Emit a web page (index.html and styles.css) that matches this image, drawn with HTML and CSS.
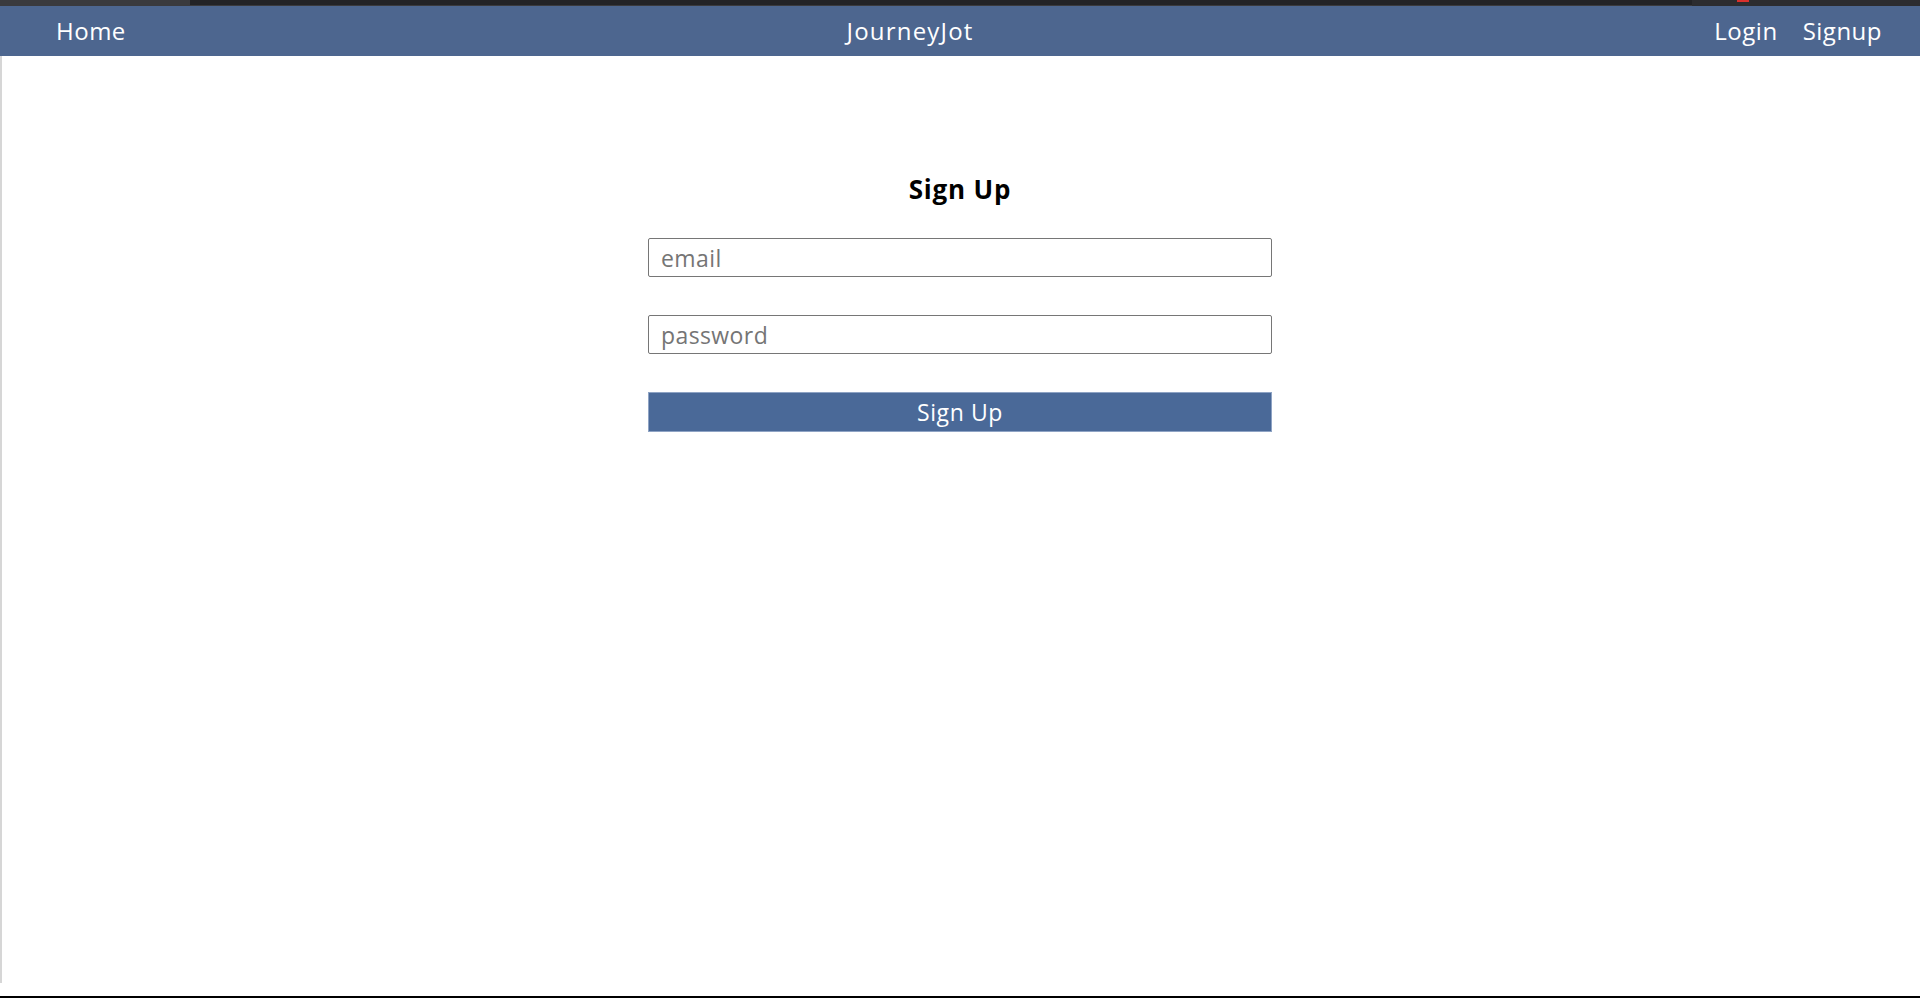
FILE: index.html
```html
<!DOCTYPE html>
<html lang="en">
<head>
<meta charset="utf-8">
<title>JourneyJot</title>
<link rel="stylesheet" href="styles.css">
</head>
<body>
<div class="page">
  <div class="topstrip">
    <div class="strip-a"></div>
    <div class="strip-b"></div>
    <div class="strip-c"><span class="strip-mark"></span></div>
  </div>
  <nav class="navbar">
    <a class="nav-link" href="#">Home</a>
    <a class="nav-link brand" href="#">JourneyJot</a>
    <div class="nav-right">
      <a class="nav-link" href="#">Login</a>
      <a class="nav-link" href="#">Signup</a>
    </div>
  </nav>
  <main class="content">
    <form class="signup-form">
      <h2 class="form-title">Sign Up</h2>
      <input class="field" type="email" placeholder="email">
      <input class="field" type="password" placeholder="password">
      <button class="submit" type="button">Sign Up</button>
    </form>
  </main>
  <div class="bottom-gap"></div>
  <div class="bottom-bar"></div>
</div>
</body>
</html>
```

FILE: styles.css
```css
* { box-sizing: border-box; }

html, body {
  margin: 0;
  padding: 0;
  background: #ffffff;
}

body {
  font-family: "Open Sans", "Liberation Sans", sans-serif;
  overflow: hidden;
}

.page {
  display: flex;
  flex-direction: column;
  height: 998px;
}

.topstrip {
  display: flex;
  height: 6px;
  background: #2c2c2f;
}

.strip-a {
  width: 190px;
  background: #3a3a3d;
}

.strip-b {
  width: 1502px;
  background: #232326;
  border-bottom: 1px solid #3a3a3d;
}

.strip-c {
  flex: 1;
  background: #2c2c2f;
  padding-left: 45px;
}

.strip-mark {
  display: block;
  width: 12px;
  height: 2px;
  background: #d9302c;
}

.navbar {
  height: 50px;
  background: #4d668f;
  display: flex;
  align-items: center;
  justify-content: space-between;
  padding: 0 38px 0 56px;
}

.nav-link {
  color: #ffffff;
  text-decoration: none;
  font-size: 24px;
  line-height: 30px;
  font-weight: 400;
  letter-spacing: 0.5px;
}

.brand {
  letter-spacing: 1.2px;
  margin-right: 20px;
}

.nav-right {
  display: flex;
  gap: 25px;
}

.content {
  height: 927px;
  background: linear-gradient(to right, #d6d6d6 2px, #ffffff 2px);
  padding-top: 115px;
}

.signup-form {
  width: 624px;
  margin: 0 auto;
  display: flex;
  flex-direction: column;
}

.form-title {
  margin: 0 0 31px;
  text-align: center;
  font-size: 26px;
  line-height: 36px;
  font-weight: 700;
  letter-spacing: 0.8px;
  color: #000000;
}

.field {
  height: 39px;
  margin: 0 0 38px;
  padding: 0 12px;
  border: 1px solid #767676;
  border-radius: 2px;
  font-family: "Open Sans", "Liberation Sans", sans-serif;
  font-size: 23px;
  letter-spacing: 0.4px;
  color: #000;
  background: #fff;
}

.field::placeholder {
  color: #757575;
}

.submit {
  height: 40px;
  border: 1px solid #8ea3c4;
  background: #4a6998;
  color: #ffffff;
  font-family: "Open Sans", "Liberation Sans", sans-serif;
  font-size: 23px;
  letter-spacing: 0.6px;
  padding: 0;
}

.bottom-gap {
  height: 13px;
}

.bottom-bar {
  height: 2px;
  background: #000000;
}
```
